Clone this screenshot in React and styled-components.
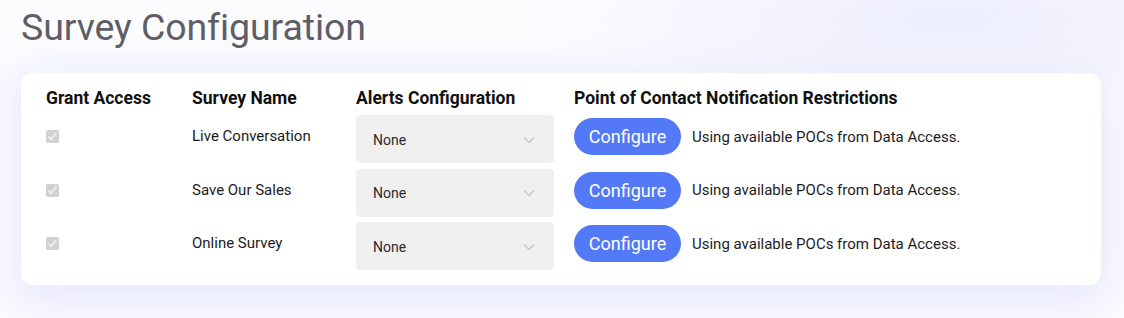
import React from 'react'
import styled, { createGlobalStyle } from 'styled-components'

const GlobalStyle = createGlobalStyle`
body{
    margin:0;
    background:#fcfcff;
    font-family: Roboto, "Liberation Sans", sans-serif;
}
`;

const rows = [
    { name: 'Live Conversation' },
    { name: 'Save Our Sales' },
    { name: 'Online Survey' },
];

function Chevron() {
    return (
        <svg width="14" height="14" viewBox="0 0 14 14" fill="none">
            <path d="M2.5 5l4.5 4.5L11.5 5" stroke="#c9c9c9" strokeWidth="1.6" strokeLinecap="round" strokeLinejoin="round" />
        </svg>
    )
}

function App() {
    return (
        <>
            <GlobalStyle />
            <Page>
                <Title>Survey Configuration</Title>
                <Card>
                    <Grid>
                        <Head>Grant Access</Head>
                        <Head>Survey Name</Head>
                        <Head>Alerts Configuration</Head>
                        <Head>Point of Contact Notification Restrictions</Head>
                        {rows.map(r => (
                            <React.Fragment key={r.name}>
                                <Cell>
                                    <Check type="checkbox" checked disabled readOnly />
                                </Cell>
                                <NameCell>{r.name}</NameCell>
                                <SelectCell>
                                    <Select>
                                        <span>None</span>
                                        <Chevron />
                                    </Select>
                                </SelectCell>
                                <Cell>
                                    <ConfigButton>Configure</ConfigButton>
                                    <Note>Using available POCs from Data Access.</Note>
                                </Cell>
                            </React.Fragment>
                        ))}
                    </Grid>
                </Card>
            </Page>
        </>
    )
}

export default App

const Page = styled.div`
width:1124px;
height:318px;
box-sizing:border-box;
padding:0 23px 0 21px;
overflow:hidden;
background:
    radial-gradient(ellipse 420px 90px at 950px 20px, rgba(232,234,252,0.8), transparent),
    #fcfcff;
`;

const Title = styled.h1`
margin:0;
padding-top:5px;
height:68px;
font-size:37.5px;
font-weight:400;
color:#5f5e66;
line-height:44px;
letter-spacing:-0.1px;
`;

const Card = styled.div`
background:#fff;
border-radius:12px;
padding:15px 25px 15px;
box-shadow: 0 10px 40px 12px rgba(220,224,250,0.6);
`;

const Grid = styled.div`
display:grid;
grid-template-columns:146px 164px 218px 1fr;
grid-template-rows:21.5px repeat(3, 48px);
row-gap:5.5px;
`;

const Head = styled.div`
font-size:17.5px;
font-weight:700;
color:#111;
line-height:21px;
white-space:nowrap;
`;

const Cell = styled.div`
display:flex;
align-items:center;
padding-bottom:5px;
`;

const NameCell = styled(Cell)`
font-size:15px;
color:#1c1c1c;
padding-bottom:6px;
`;

const SelectCell = styled.div`
display:flex;
align-items:center;
`;

const Check = styled.input`
margin:0;
width:13px;
height:13px;
`;

const Select = styled.div`
width:198px;
height:48px;
box-sizing:border-box;
background:#f0f0f0;
border-radius:4px;
display:flex;
align-items:center;
justify-content:space-between;
padding:1px 18px 0 17px;
font-size:14px;
color:#2a2a2a;
`;

const ConfigButton = styled.button`
height:37px;
width:107px;
border:none;
border-radius:19px;
background:#5479f7;
color:#fff;
font-family:inherit;
font-size:18px;
padding:0;
margin-right:11px;
`;

const Note = styled.span`
font-size:15px;
color:#1c1c1c;
`;
